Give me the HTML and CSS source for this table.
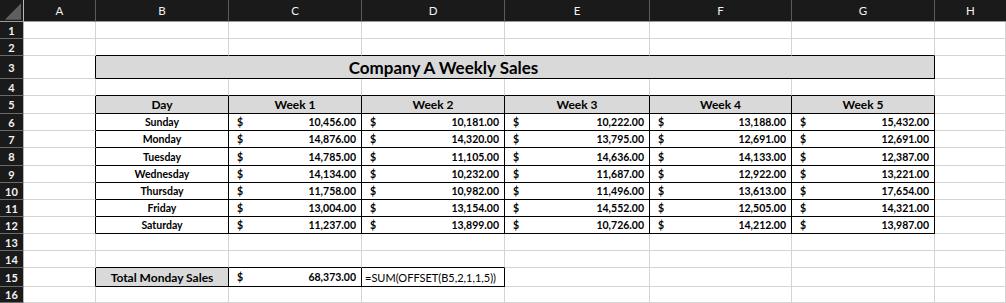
FILE: index.html
```html
<!DOCTYPE html>
<html>
<head>
<meta charset="utf-8">
<link rel="stylesheet" href="styles.css">
</head>
<body>
<div class="sheet">
  <div class="corner"><svg width="24" height="22" viewBox="0 0 24 22"><polygon points="22,3 22,20 5,20" fill="#5f5f5f"/></svg></div>
  <div class="ch">A</div><div class="ch">B</div><div class="ch">C</div><div class="ch">D</div><div class="ch">E</div><div class="ch">F</div><div class="ch">G</div><div class="ch last">H</div>

  <div class="rh">1</div><div class="c"></div><div class="c"></div><div class="c"></div><div class="c"></div><div class="c"></div><div class="c"></div><div class="c"></div><div class="c"></div>
  <div class="rh">2</div><div class="c"></div><div class="c kb"></div><div class="c kb"></div><div class="c kb"></div><div class="c kb"></div><div class="c kb"></div><div class="c kb"></div><div class="c"></div>
  <div class="rh">3</div><div class="c kr"></div><div class="c kb kr fill title">Company A Weekly Sales</div><div class="c"></div>
  <div class="rh">4</div><div class="c"></div><div class="c kb"></div><div class="c kb"></div><div class="c kb"></div><div class="c kb"></div><div class="c kb"></div><div class="c kb"></div><div class="c"></div>
  <div class="rh">5</div><div class="c kr"></div><div class="c kb kr fill ctr b hd">Day</div><div class="c kb kr fill ctr b hd">Week 1</div><div class="c kb kr fill ctr b hd">Week 2</div><div class="c kb kr fill ctr b hd">Week 3</div><div class="c kb kr fill ctr b hd">Week 4</div><div class="c kb kr fill ctr b hd">Week 5</div><div class="c"></div>

  <div class="rh">6</div><div class="c kr"></div><div class="c kb kr ctr b">Sunday</div>
  <div class="c kb kr m"><span>$</span><span>10,456.00</span></div><div class="c kb kr m"><span>$</span><span>10,181.00</span></div><div class="c kb kr m"><span>$</span><span>10,222.00</span></div><div class="c kb kr m"><span>$</span><span>13,188.00</span></div><div class="c kb kr m"><span>$</span><span>15,432.00</span></div><div class="c"></div>

  <div class="rh">7</div><div class="c kr"></div><div class="c kb kr ctr b">Monday</div>
  <div class="c kb kr m"><span>$</span><span>14,876.00</span></div><div class="c kb kr m"><span>$</span><span>14,320.00</span></div><div class="c kb kr m"><span>$</span><span>13,795.00</span></div><div class="c kb kr m"><span>$</span><span>12,691.00</span></div><div class="c kb kr m"><span>$</span><span>12,691.00</span></div><div class="c"></div>

  <div class="rh">8</div><div class="c kr"></div><div class="c kb kr ctr b">Tuesday</div>
  <div class="c kb kr m"><span>$</span><span>14,785.00</span></div><div class="c kb kr m"><span>$</span><span>11,105.00</span></div><div class="c kb kr m"><span>$</span><span>14,636.00</span></div><div class="c kb kr m"><span>$</span><span>14,133.00</span></div><div class="c kb kr m"><span>$</span><span>12,387.00</span></div><div class="c"></div>

  <div class="rh">9</div><div class="c kr"></div><div class="c kb kr ctr b">Wednesday</div>
  <div class="c kb kr m"><span>$</span><span>14,134.00</span></div><div class="c kb kr m"><span>$</span><span>10,232.00</span></div><div class="c kb kr m"><span>$</span><span>11,687.00</span></div><div class="c kb kr m"><span>$</span><span>12,922.00</span></div><div class="c kb kr m"><span>$</span><span>13,221.00</span></div><div class="c"></div>

  <div class="rh">10</div><div class="c kr"></div><div class="c kb kr ctr b">Thursday</div>
  <div class="c kb kr m"><span>$</span><span>11,758.00</span></div><div class="c kb kr m"><span>$</span><span>10,982.00</span></div><div class="c kb kr m"><span>$</span><span>11,496.00</span></div><div class="c kb kr m"><span>$</span><span>13,613.00</span></div><div class="c kb kr m"><span>$</span><span>17,654.00</span></div><div class="c"></div>

  <div class="rh">11</div><div class="c kr"></div><div class="c kb kr ctr b">Friday</div>
  <div class="c kb kr m"><span>$</span><span>13,004.00</span></div><div class="c kb kr m"><span>$</span><span>13,154.00</span></div><div class="c kb kr m"><span>$</span><span>14,552.00</span></div><div class="c kb kr m"><span>$</span><span>12,505.00</span></div><div class="c kb kr m"><span>$</span><span>14,321.00</span></div><div class="c"></div>

  <div class="rh">12</div><div class="c kr"></div><div class="c kb kr ctr b">Saturday</div>
  <div class="c kb kr m"><span>$</span><span>11,237.00</span></div><div class="c kb kr m"><span>$</span><span>13,899.00</span></div><div class="c kb kr m"><span>$</span><span>10,726.00</span></div><div class="c kb kr m"><span>$</span><span>14,212.00</span></div><div class="c kb kr m"><span>$</span><span>13,987.00</span></div><div class="c"></div>

  <div class="rh">13</div><div class="c"></div><div class="c"></div><div class="c"></div><div class="c"></div><div class="c"></div><div class="c"></div><div class="c"></div><div class="c"></div>
  <div class="rh">14</div><div class="c"></div><div class="c kb"></div><div class="c kb"></div><div class="c kb"></div><div class="c"></div><div class="c"></div><div class="c"></div><div class="c"></div>
  <div class="rh">15</div><div class="c kr"></div><div class="c kb kr fill ctr b big">Total Monday Sales</div><div class="c kb kr m"><span>$</span><span>68,373.00</span></div><div class="c kb kr formula">=SUM(OFFSET(B5,2,1,1,5))</div><div class="c"></div><div class="c"></div><div class="c"></div><div class="c"></div>
  <div class="rh">16</div><div class="c"></div><div class="c"></div><div class="c"></div><div class="c"></div><div class="c"></div><div class="c"></div><div class="c"></div><div class="c"></div>
</div>
</body>
</html>
```
FILE: styles.css
```css
html, body {
  margin: 0;
  padding: 0;
  background: #ffffff;
}
.sheet {
  display: grid;
  grid-template-columns: 24px 72px 133px 133px 143px 145px 142px 143px 71px;
  grid-template-rows: 22px 17px 17px 23px 17px 18px 17px 17px 18px 17px 17px 17px 17px 17px 17px 19px 16px;
  width: 1006px;
  height: 303px;
  overflow: hidden;
  font-family: "Lato", "Liberation Sans", sans-serif;
  color: #000;
}
.corner {
  background: #1a1a1a;
  border-right: 1px solid #b8b8b8;
  border-bottom: 1px solid #9a9a9a;
  box-sizing: border-box;
  display: flex;
}
.corner svg { display: block; }
.ch {
  background: #1a1a1a;
  color: #f2f2f2;
  font-size: 11.5px;
  display: flex;
  align-items: center;
  justify-content: center;
  border-right: 1px solid #5a5a5a;
  border-bottom: 1px solid #9a9a9a;
  box-sizing: border-box;
}
.ch.last { border-right: none; }
.rh {
  background: #1a1a1a;
  color: #f2f2f2;
  font-size: 11px;
  font-weight: 700;
  display: flex;
  align-items: center;
  justify-content: center;
  border-bottom: 1px solid #6a6a6a;
  border-right: 1px solid #b8b8b8;
  box-sizing: border-box;
}
.c {
  box-sizing: border-box;
  border-right: 1px solid #d4d4d4;
  border-bottom: 1px solid #d4d4d4;
  display: flex;
  align-items: center;
  font-size: 10.5px;
  white-space: nowrap;
  overflow: hidden;
}
.kb { border-bottom-color: #000; }
.kr { border-right-color: #000; }
.fill { background: #d9d9d9; }
.b { font-weight: 700; }
.ctr { justify-content: center; }
.hd { font-size: 12px; }
.big { font-size: 12px; }
.title {
  grid-column: span 6;
  justify-content: center;
  padding-right: 143px;
  font-size: 17px;
  font-weight: 700;
}
.m {
  justify-content: space-between;
  font-weight: 700;
  padding: 0 5px 0 8px;
}
.formula {
  padding-left: 3px;
  font-size: 11px;
}
```
